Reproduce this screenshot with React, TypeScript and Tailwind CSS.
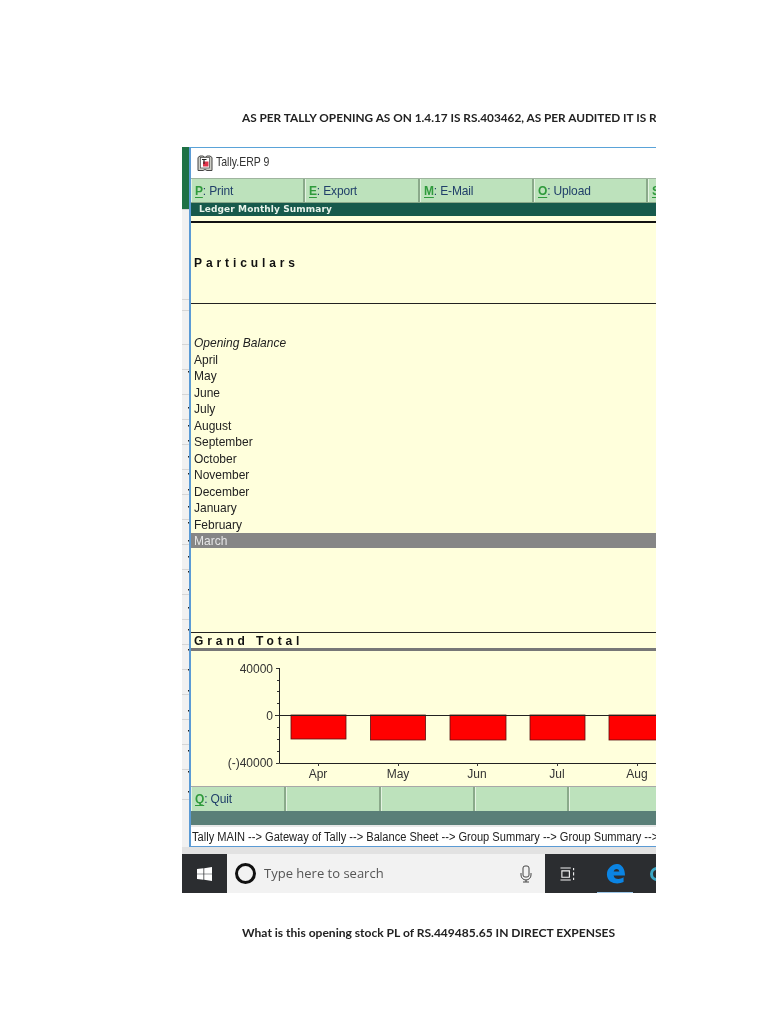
import React from "react";

const months = ["April","May","June","July","August","September","October","November","December","January","February"];

function TallyIcon() {
  return (
    <svg width="16" height="17" viewBox="0 0 16 17" className="shrink-0">
      <path d="M1 2.5 L3 1 H6 L8 2.5 L10 1 H13 L15 2.5 V15.5 H10 L8 14.5 L6 15.5 H1 Z" fill="#cfcfc8" stroke="#444" strokeWidth="1" />
      <rect x="3.5" y="2.5" width="9" height="10.5" fill="#fff" stroke="#555" strokeWidth="0.8" />
      <rect x="6" y="6.5" width="5.5" height="5" fill="#e0324a" />
      <path d="M5 4.5 H9.5 M7 4.5 V9" stroke="#222" strokeWidth="1.1" fill="none" />
    </svg>
  );
}

function Cell({ k, label, className }: { k: string; label: string; className: string }) {
  return (
    <div className={"flex h-full shrink-0 items-center border-r-2 border-r-[#8aa98a] border-l border-l-[#e4f3e2] pl-[3px] text-[12px] tracking-[-0.15px] text-[#21406a] " + className}>
      {k && <span className="font-bold text-[#2f9a3c] underline decoration-1 underline-offset-2">{k}</span>}
      {k && <span>:&nbsp;</span>}
      <span className="inline-block scale-y-[1.12]">{label}</span>
    </div>
  );
}

function Chart() {
  const bars = [[290, 55, 24], [369.5, 55, 25], [449, 56, 25], [529, 55, 25], [608, 60, 25]];
  const labels = [["Apr", 317], ["May", 397], ["Jun", 476], ["Jul", 556], ["Aug", 636]] as const;
  const ticks = [668, 680, 691, 703, 715, 727, 739, 751, 763];
  return (
    <svg width="466" height="135" viewBox="190 651 466 135" className="block">
      <g fontFamily="Liberation Sans, sans-serif" fontSize="12" fill="#333" textAnchor="end">
        <text x="272" y="673">40000</text>
        <text x="272" y="720">0</text>
        <text x="272" y="767">(-)40000</text>
      </g>
      {bars.map(([x, w, h]) => (
        <rect key={x} x={x} y={715} width={w} height={h} fill="#ff0000" stroke="#5a1010" strokeWidth="0.8" />
      ))}
      <path d="M278.5 668 V763.5 H656 M274 715.5 H656" stroke="#222" strokeWidth="1" fill="none" />
      {ticks.map((y) => (
        <path key={y} d={`M${y === 668 || y === 715 || y === 763 ? 275 : 276} ${y + 0.5} H278`} stroke="#333" strokeWidth="1" />
      ))}
      {labels.map(([t, x]) => (
        <g key={t}>
          <path d={`M${x + 0.5} 763 V766`} stroke="#333" />
          <text x={x} y="778" textAnchor="middle" fontFamily="Liberation Sans, sans-serif" fontSize="12" fill="#333">{t}</text>
        </g>
      ))}
    </svg>
  );
}

function Strip() {
  const lines = [210, 300, 311, 345, 370, 395, 420, 445, 470, 495, 520, 545, 570, 595, 620, 645, 670, 695, 720, 745, 770, 800];
  return (
    <svg width="8" height="700" viewBox="182 148 8 700" className="block shrink-0">
      <rect x="182" y="148" width="8" height="700" fill="#f1f1f1" />
      <rect x="182" y="148" width="8" height="62" fill="#1e7145" />
      {lines.map((y) => <rect key={y} x="182" y={y} width="7" height="1" fill="#d6d6d6" />)}
      {[372, 408, 426, 441, 457, 474, 490, 507, 523, 541, 557, 572, 590, 608, 630, 650, 670, 691, 711, 731, 751, 772, 792].map((y) => (
        <rect key={y} x="188" y={y} width="1" height="1.5" fill="#222" />
      ))}
    </svg>
  );
}

export default function App() {
  return (
    <div className="h-[1024px] w-[768px] bg-white blur-[0.35px] [font-family:'Liberation_Sans',Arial,sans-serif]">
      <div className="ml-[182px] flex w-[474px] flex-col overflow-hidden">
        <div className="flex h-[147px] items-end overflow-hidden pb-[20px] pl-[60px] [font-family:Lato,sans-serif] text-[11.8px] font-bold whitespace-nowrap text-[#222]">
          AS PER TALLY OPENING AS ON 1.4.17 IS RS.403462, AS PER AUDITED IT IS RS.
        </div>

        <div className="flex h-[700px]">
          <div className="h-full w-[7px] shrink-0 overflow-hidden"><Strip /></div>
          <div className="flex min-w-0 flex-1 flex-col border-t border-l-2 border-t-[#5aa3d8] border-l-[#5b9bd5] bg-white">
            <div className="flex h-[30px] shrink-0 items-center gap-[3px] pl-[6px] text-[10.5px] text-[#333]">
              <TallyIcon />
              <span className="inline-block scale-y-[1.15]">Tally.ERP 9</span>
            </div>
            <div className="flex h-[24px] shrink-0 border-t border-[#9fb49f] bg-[#bde2bc]">
              <Cell k="P" label="Print" className="w-[114px]" />
              <Cell k="E" label="Export" className="w-[115px]" />
              <Cell k="M" label="E-Mail" className="w-[114px]" />
              <Cell k="O" label="Upload" className="w-[114px]" />
              <Cell k="S" label="" className="w-[40px]" />
            </div>
            <div className="flex h-[14px] shrink-0 items-center border-t border-[#8aa98a] bg-[#175a4c] pl-[8px] [font-family:'DejaVu_Sans',sans-serif] text-[9px] font-bold tracking-[0.1px] text-[#e8f3ea]">
              Ledger Monthly Summary
            </div>
            <div className="flex flex-1 flex-col bg-[#ffffdc] text-[12px] text-[#222]">
              <div className="mt-[5px] h-[2px] shrink-0 bg-[#111]" />
              <div className="flex h-[80px] shrink-0 items-center pl-[3px] text-[12px] font-bold tracking-[3.9px] text-[#111]">Particulars</div>
              <div className="h-px shrink-0 bg-[#222]" />
              <div className="mt-[31px] flex flex-col">
                <div className="flex h-[16.5px] items-center pl-[3px] text-[12px] italic"><span className="inline-block scale-y-[1.12]">Opening Balance</span></div>
                {months.map((m) => (
                  <div key={m} className="flex h-[16.5px] items-center pl-[3px] text-[12px]"><span className="inline-block scale-y-[1.12]">{m}</span></div>
                ))}
                <div className="flex h-[15px] items-center bg-[#868686] pl-[3px] text-[12px] text-[#e6e6e6]"><span className="inline-block scale-y-[1.12]">March</span></div>
              </div>
              <div className="mt-[84px] h-px shrink-0 bg-[#222]" />
              <div className="flex h-[15px] shrink-0 items-center pl-[3px] text-[12px] font-bold tracking-[3.9px] text-[#111]">Grand Total</div>
              <div className="h-[3px] shrink-0 bg-[#777]" />
              <div className="h-[135px] shrink-0"><Chart /></div>
              <div className="flex h-[25px] shrink-0 border-t border-[#a8a8a8] bg-[#bde2bc]">
                <Cell k="Q" label="Quit" className="w-[95px]" />
                <Cell k="" label="" className="w-[95px]" />
                <Cell k="" label="" className="w-[94px]" />
                <Cell k="" label="" className="w-[94px]" />
                <Cell k="" label="" className="w-[90px]" />
              </div>
              <div className="h-[14px] shrink-0 bg-[#5a7f78]" />
              <div className="h-[2px] shrink-0 bg-[#e8e8e8]" />
              <div className="flex h-[19px] shrink-0 items-center overflow-hidden bg-white pl-[1px] text-[11.1px] whitespace-nowrap text-[#222]">
                <span className="inline-block scale-y-[1.2]">Tally MAIN --&gt; Gateway of Tally --&gt; Balance Sheet --&gt; Group Summary --&gt; Group Summary --&gt;</span>
              </div>
            </div>
            <div className="h-px shrink-0 bg-[#5b9bd5]" />
          </div>
        </div>

        <div className="h-[7px] bg-[#e2e2e2]" />

        <div className="flex h-[39px] items-stretch">
          <div className="flex w-[45px] shrink-0 items-center justify-center bg-[#2b2d30]">
            <svg width="15" height="14" viewBox="0 0 16 16" preserveAspectRatio="none" fill="#fff">
              <path d="M0 2.4 6.9 1.4V7.6H0ZM7.7 1.3 16 0V7.6H7.7ZM0 8.4H6.9V14.6L0 13.6ZM7.7 8.4H16V16L7.7 14.7Z" />
            </svg>
          </div>
          <div className="flex w-[318px] shrink-0 items-center bg-[#f2f2f2] pl-[8px]">
            <div className="h-[21px] w-[21px] shrink-0 rounded-full border-[3px] border-[#111]" />
            <span className="ml-[8px] [font-family:'Open_Sans',sans-serif] text-[13px] text-[#555]">Type here to search</span>
            <svg width="12" height="18" viewBox="0 0 12 18" fill="none" stroke="#444" strokeWidth="1" className="mr-[13px] ml-auto">
              <rect x="3" y="1" width="6" height="11" rx="2" />
              <path d="M1 8V10A5 5 0 0 0 11 10V8M6 15V17M3 17H9" />
            </svg>
          </div>
          <div className="relative flex min-w-0 flex-1 items-center bg-[#2b2d30]">
            <svg width="15" height="14" viewBox="0 0 16 14" fill="none" stroke="#f2f2f2" strokeWidth="1.2" className="ml-[15px] shrink-0">
              <path d="M0.5 0.6H11.5M0.5 13.4H11.5M2 3.6H10V10.4H2ZM14.5 0.5V3M14.5 5V8.5M14.5 11V13.5" />
            </svg>
            <svg width="19" height="21" viewBox="0 0 20 21" fill="#0b84e3" fillRule="evenodd" className="ml-[31px] shrink-0">
              <path d="M1 12C0.5 5 7 0 12 0.5C17 1 20 6 20 12.5H8C8.5 16.5 14 17.5 18.5 14.5V19.5C12 22.5 1.5 21 1 12ZM8 8.5H14C13.5 5 9 5 8 8.5Z" />
            </svg>
            <div className="ml-[25px] h-[14px] w-[14px] shrink-0 rounded-full border-[3px] border-[#3aa6c4]" />
            <div className="absolute bottom-0 left-[52px] h-[1px] w-[36px] bg-[#9cc6e8]" />
          </div>
        </div>

        <div className="mt-[31px] pl-[60px] [font-family:Lato,sans-serif] text-[12.05px] font-bold whitespace-nowrap text-[#222]">
          What is this opening stock PL of RS.449485.65 IN DIRECT EXPENSES
        </div>
      </div>
    </div>
  );
}
